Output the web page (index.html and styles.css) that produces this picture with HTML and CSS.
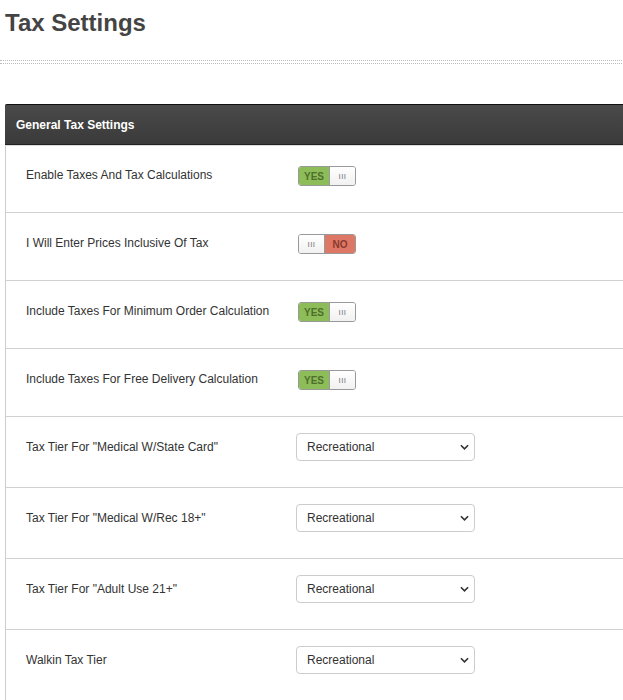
FILE: index.html
```html
<!DOCTYPE html>
<html>
<head>
<meta charset="utf-8">
<title>Tax Settings</title>
<link rel="stylesheet" href="styles.css">
</head>
<body>
<div class="page">
  <h1 class="page-title">Tax Settings</h1>
  <div class="divider"></div>

  <section class="panel">
    <header class="panel-head">General Tax Settings</header>

    <div class="row row-toggle">
      <span class="label">Enable Taxes And Tax Calculations</span>
      <span class="toggle on"><span class="state">YES</span><span class="knob">III</span></span>
    </div>
    <div class="row row-toggle">
      <span class="label">I Will Enter Prices Inclusive Of Tax</span>
      <span class="toggle off"><span class="knob">III</span><span class="state">NO</span></span>
    </div>
    <div class="row row-toggle">
      <span class="label">Include Taxes For Minimum Order Calculation</span>
      <span class="toggle on"><span class="state">YES</span><span class="knob">III</span></span>
    </div>
    <div class="row row-toggle">
      <span class="label">Include Taxes For Free Delivery Calculation</span>
      <span class="toggle on"><span class="state">YES</span><span class="knob">III</span></span>
    </div>

    <div class="row row-select">
      <span class="label">Tax Tier For "Medical W/State Card"</span>
      <span class="select">Recreational<svg class="chev" viewBox="0 0 10 6" width="9" height="6"><path d="M1 1l4 4 4-4" fill="none" stroke="#333" stroke-width="1.8"/></svg></span>
    </div>
    <div class="row row-select">
      <span class="label">Tax Tier For "Medical W/Rec 18+"</span>
      <span class="select">Recreational<svg class="chev" viewBox="0 0 10 6" width="9" height="6"><path d="M1 1l4 4 4-4" fill="none" stroke="#333" stroke-width="1.8"/></svg></span>
    </div>
    <div class="row row-select">
      <span class="label">Tax Tier For "Adult Use 21+"</span>
      <span class="select">Recreational<svg class="chev" viewBox="0 0 10 6" width="9" height="6"><path d="M1 1l4 4 4-4" fill="none" stroke="#333" stroke-width="1.8"/></svg></span>
    </div>
    <div class="row row-select">
      <span class="label">Walkin Tax Tier</span>
      <span class="select">Recreational<svg class="chev" viewBox="0 0 10 6" width="9" height="6"><path d="M1 1l4 4 4-4" fill="none" stroke="#333" stroke-width="1.8"/></svg></span>
    </div>
  </section>
</div>
</body>
</html>
```

FILE: styles.css
```css
html, body {
  margin: 0;
  padding: 0;
  background: #fff;
  overflow: hidden;
}

body {
  font-family: "Liberation Sans", Arial, sans-serif;
  color: #333;
}

.page {
  width: 640px;
}

.page-title {
  margin: 0;
  padding: 9px 0 0 5px;
  font-size: 24px;
  line-height: 28px;
  font-weight: bold;
  color: #444;
}

.divider {
  margin-top: 23px;
  height: 2px;
  border-top: 1px dotted #bbb;
  border-bottom: 1px dotted #bbb;
}

.panel {
  margin: 40px 0 0 5px;
  border-left: 1px solid #ccc;
}

.panel-head {
  height: 39px;
  margin-left: -1px;
  padding-left: 11px;
  display: flex;
  align-items: center;
  background: linear-gradient(#4a4a4a, #3a3a3a);
  border-top: 1px solid #111;
  border-bottom: 1px solid #222;
  box-shadow: 0 1px 0 #ddd;
  border-radius: 2px 0 0 0;
  color: #fff;
  font-size: 12px;
  font-weight: bold;
}

.row {
  display: flex;
  align-items: flex-start;
  border-bottom: 1px solid #d0d0d0;
  box-sizing: border-box;
}

.label {
  width: 272px;
  padding-left: 20px;
  font-size: 12px;
  color: #333;
  flex-shrink: 0;
}

.row-toggle {
  height: 68px;
  padding-top: 22px;
}

.row-toggle .label {
  line-height: 16px;
}

.toggle {
  display: inline-flex;
  height: 20px;
  box-sizing: border-box;
  border: 1px solid #999;
  border-radius: 3px;
  overflow: hidden;
  margin-top: -1px;
  font-size: 10px;
  font-weight: bold;
}

.toggle .state,
.toggle .knob {
  display: flex;
  align-items: center;
  justify-content: center;
}

.toggle .knob {
  width: 25px;
  background: linear-gradient(#fff, #f1f1f1);
  color: #777;
  font-weight: normal;
  font-size: 8px;
  letter-spacing: 0.5px;
}

.toggle.on .state {
  width: 30px;
  background: #8cbd58;
  color: #4f6e2d;
  border-right: 1px solid #999;
}

.toggle.off .state {
  width: 30px;
  background: #df7766;
  color: #8a3a2c;
  border-left: 1px solid #999;
}

.row-select {
  height: 71px;
  padding-top: 16px;
}

.row-select .label {
  line-height: 28px;
  width: 270px;
}

.select {
  width: 179px;
  height: 28px;
  box-sizing: border-box;
  border: 1px solid #ccc;
  border-radius: 4px;
  display: flex;
  align-items: center;
  justify-content: space-between;
  padding: 0 5px 0 10px;
  font-size: 12px;
  color: #333;
  background: #fff;
}

.chev {
  display: block;
}
```
